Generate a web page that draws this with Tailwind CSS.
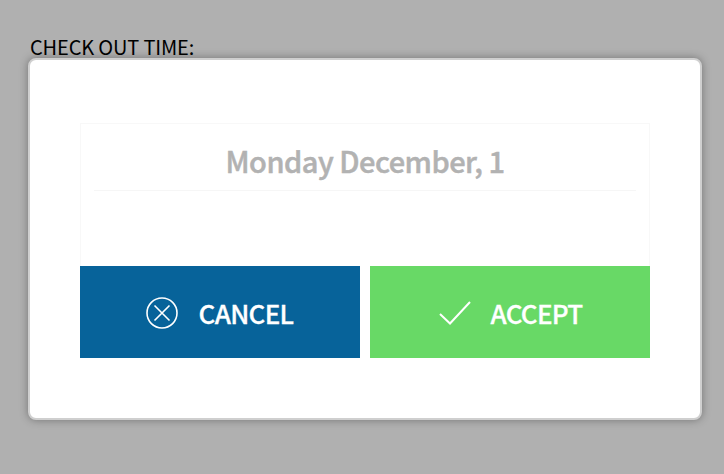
<!DOCTYPE html>
<html lang="en">
<head>
  <meta charset="UTF-8" />
  <title>Check out time</title>
  <script src="https://cdn.jsdelivr.net/npm/@tailwindcss/browser@4"></script>
</head>
<body class="bg-[#b0b0b0] h-[474px] overflow-hidden font-['Noto_Sans_CJK_SC','Noto_Sans',sans-serif]">
  <div class="pt-[36px] px-[28px]">
    <!-- Label -->
    <p class="pl-[2px] h-[22px] text-[20px] leading-[22px] tracking-[-0.15px] text-black">CHECK OUT TIME:</p>

    <!-- Modal -->
    <div class="w-[674px] h-[362px] bg-white border-2 border-[#cfcfcf] rounded-[8px] shadow-[0_0_8px_rgba(0,0,0,0.35)] pt-[63px] px-[50px]">
      <div class="border border-[#f8f8f8] border-b-0 h-[143px] px-[13px]">
        <div class="h-[67px] border-b border-[#f6f6f6] flex items-center justify-center pt-[7px]">
          <h2 class="text-[29px] font-medium text-[#b2b2b2] [-webkit-text-stroke:0.5px_#b2b2b2] tracking-[-0.5px]">Monday December, 1</h2>
        </div>
      </div>

      <!-- Buttons -->
      <div class="flex gap-[10px]">
        <button class="w-[280px] h-[92px] bg-[#07639a] text-white flex items-center justify-center gap-[21px] pr-[1px]">
          <svg class="w-[32px] h-[32px] mt-[2px]" viewBox="0 0 32 32" fill="none" stroke="white" stroke-width="1.6">
            <circle cx="16" cy="16" r="15" />
            <path d="M8.5 8.5 L23.5 23.5 M23.5 8.5 L8.5 23.5" />
          </svg>
          <span class="text-[26px] font-medium [-webkit-text-stroke:0.3px_white] leading-none tracking-[-0.7px] pt-[2px]">CANCEL</span>
        </button>
        <button class="w-[280px] h-[92px] bg-[#68d966] text-white flex items-center justify-center gap-[19px]">
          <svg class="w-[32px] h-[24px] mt-[1px] ml-[2px]" viewBox="0 0 32 24" fill="none" stroke="white" stroke-width="2">
            <path d="M1 13 L11 22.5 L31 1" />
          </svg>
          <span class="text-[26px] font-medium [-webkit-text-stroke:0.3px_white] leading-none tracking-[-0.7px] pt-[2px]">ACCEPT</span>
        </button>
      </div>
    </div>
  </div>
</body>
</html>
